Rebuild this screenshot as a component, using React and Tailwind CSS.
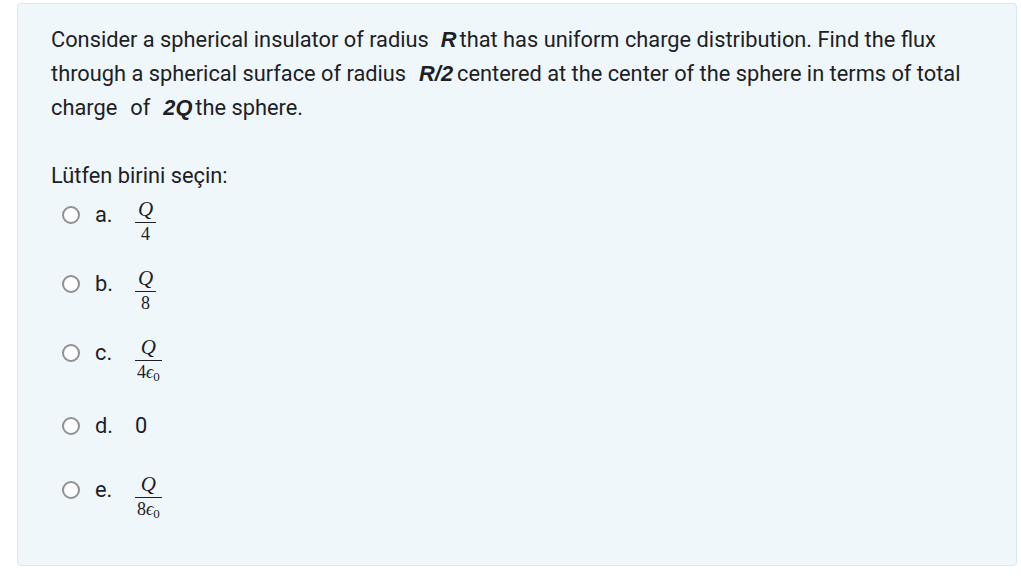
import React from "react";

const serif = { fontFamily: '"Liberation Serif", "DejaVu Serif", serif' };

function Frac({ den, sub }) {
  return (
    <span className={"inline-flex flex-col items-center " + (sub ? "pb-[5px]" : "")} style={serif}>
      <span className="italic text-[21px] leading-[22px] px-[3px]">Q</span>
      <span className="block h-[1px] w-full bg-[#1d2125] mt-[2px]" />
      <span className="text-[18px] leading-[20px] mt-[1px] px-[2px]">
        {den}
        {sub && (
          <>
            <span className="italic">ϵ</span>
            <span className="text-[13px] relative top-[3px]">0</span>
          </>
        )}
      </span>
    </span>
  );
}

function Radio() {
  return (
    <span className="inline-block w-[18px] h-[18px] rounded-full border-2 border-[#8e9093] bg-white shrink-0" />
  );
}

function Option({ letter, children, className }) {
  return (
    <div className={"flex items-start " + (className || "")}>
      <div className="flex items-center h-[34px] pl-[11px]">
        <Radio />
        <span className="ml-[15px] w-[40px]">{letter}.</span>
      </div>
      <div className="min-h-[34px] flex items-start">{children}</div>
    </div>
  );
}

const B = ({ children, ml, mr }) => (
  <span
    className={"font-bold italic " + ml + " " + mr}
    style={{ fontFamily: '"Liberation Sans", Arial, sans-serif' }}
  >
    {children}
  </span>
);

export default function App() {
  return (
    <div className="w-[1021px] h-[583px] bg-white pt-[3px] pl-[17px]">
      <div
        className="w-[1000px] h-[563px] rounded-[4px] border border-[#d3ebf2] bg-[#eff7fb] pl-[33px] pr-[10px] pt-[19px] text-[#1d2125] text-[21.8px] leading-[34px] whitespace-nowrap"
        style={{ fontFamily: 'Roboto, "Noto Sans", sans-serif' }}
      >
        <p>
          Consider a spherical insulator of radius
          <B ml="ml-[12px]" mr="mr-[3px]">R</B>that has uniform charge
          distribution. Find the flux
          <br />
          through a spherical surface of radius
          <B ml="ml-[13px]" mr="mr-[4px]">R/2</B>centered at the center of the
          sphere in terms of total
          <br />
          charge<span className="ml-[13px]">of</span>
          <B ml="ml-[13px]" mr="mr-[3px]">2Q</B>the sphere.
        </p>
        <p className="mt-[34px]">Lütfen birini seçin:</p>
        <div className="mt-[5px] flex flex-col">
          <Option letter="a">
            <Frac den="4" />
          </Option>
          <Option letter="b" className="mt-[23px]">
            <Frac den="8" />
          </Option>
          <Option letter="c" className="mt-[23px]">
            <Frac den="4" sub />
          </Option>
          <Option letter="d" className="mt-[20px]">
            <span>0</span>
          </Option>
          <Option letter="e" className="mt-[30px]">
            <Frac den="8" sub />
          </Option>
        </div>
      </div>
    </div>
  );
}
